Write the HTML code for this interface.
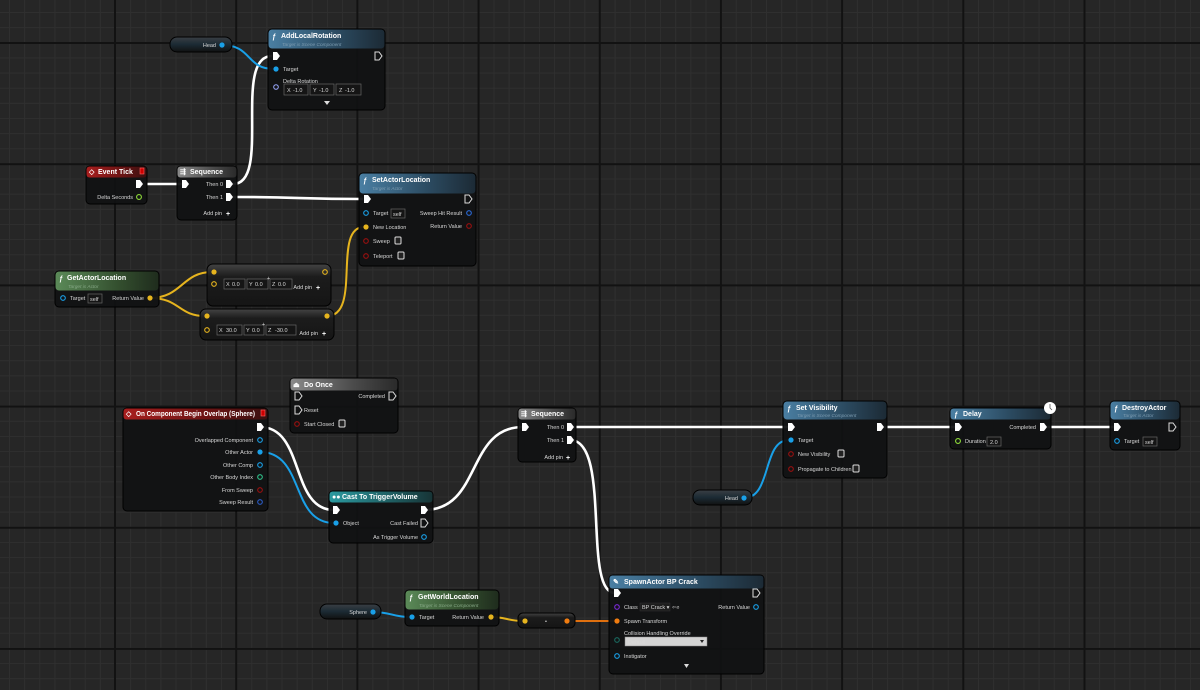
<!DOCTYPE html>
<html><head><meta charset="utf-8"><style>
html,body{margin:0;padding:0;width:1200px;height:690px;overflow:hidden}
body{background-color:#262626;
background-image:
linear-gradient(to right,#121212 2px,transparent 2px),
linear-gradient(to bottom,#121212 2px,transparent 2px),
linear-gradient(to right,#2f2f2f 1px,transparent 1px),
linear-gradient(to bottom,#2f2f2f 1px,transparent 1px);
background-size:121.2px 121.2px,121.2px 121.2px,15.15px 15.15px,15.15px 15.15px;
background-position:114px 0,0 42px,9px 0,0 12px;}
svg{position:absolute;left:0;top:0}
text{font-family:"Liberation Sans",sans-serif;fill:#d8d8d8;font-size:5.5px}
.t{fill:#fff;font-size:7px;font-weight:bold}
.s{fill:#7c9bb0;font-size:4.8px;font-style:italic}
.sg{fill:#86a886;font-size:4.8px;font-style:italic}
.e{text-anchor:end}
.body{fill:#111213;fill-opacity:.95;stroke:#000;stroke-width:1}
.w{fill:none;stroke:#fff;stroke-width:2.6}
.b{fill:none;stroke:#19a0e8;stroke-width:2}
.y{fill:none;stroke:#e6b41e;stroke-width:2}
.box{fill:#151515;stroke:#666;stroke-width:.7}
.cb{fill:#222;stroke:#ddd;stroke-width:1}
</style></head><body>
<svg width="1200" height="690" viewBox="0 0 1200 690">
<defs>
<linearGradient id="gb" x1="0" x2="1"><stop offset="0" stop-color="#4a7fa3"/><stop offset=".6" stop-color="#2b4a60"/><stop offset="1" stop-color="#1c2a35"/></linearGradient>
<linearGradient id="gr" x1="0" x2="1"><stop offset="0" stop-color="#a81e1e"/><stop offset=".6" stop-color="#6a1414"/><stop offset="1" stop-color="#3a1010"/></linearGradient>
<linearGradient id="gg" x1="0" x2="1"><stop offset="0" stop-color="#5b8a58"/><stop offset=".6" stop-color="#34502f"/><stop offset="1" stop-color="#1f2c1d"/></linearGradient>
<linearGradient id="gy" x1="0" x2="1"><stop offset="0" stop-color="#8a8a8a"/><stop offset=".6" stop-color="#4a4a4a"/><stop offset="1" stop-color="#2a2a2a"/></linearGradient>
<linearGradient id="gt" x1="0" x2="1"><stop offset="0" stop-color="#2b9aa0"/><stop offset=".6" stop-color="#1f5e62"/><stop offset="1" stop-color="#173436"/></linearGradient>
<linearGradient id="gp" x1="0" y1="0" x2="0" y2="1"><stop offset="0" stop-color="#3a3f44"/><stop offset=".5" stop-color="#1b2a34"/><stop offset="1" stop-color="#111"/></linearGradient>
<linearGradient id="gc" x1="0" y1="0" x2="0" y2="1"><stop offset="0" stop-color="#444"/><stop offset=".3" stop-color="#1c1c1c"/><stop offset="1" stop-color="#151515"/></linearGradient>
</defs>

<path class="w" d="M147,184 L182,184"/>
<path class="w" d="M233,184 C272,184 232,56 272,56"/>
<path class="w" d="M233,197 C300,197 300,199 363,199"/>
<path class="b" d="M222,45 C252,45 246,69 274,69"/>
<path class="y" d="M150,298 C182,298 182,272 212,272"/>
<path class="y" d="M150,298 C180,298 178,316 205,316"/>
<path class="y" d="M327,316 C362,316 332,227 364,227"/>
<path class="w" d="M260,427 C305,427 290,510 334,510"/>
<path class="b" d="M260,452 C305,452 290,523 334,523"/>
<path class="w" d="M424,510 C482,510 466,427 523,427"/>
<path class="w" d="M570,427 L788,427"/>
<path class="w" d="M570,440 C612,440 582,593 615,593"/>
<path class="w" d="M880,427 L956,427"/>
<path class="w" d="M1043,427 L1115,427"/>
<path class="b" d="M744,498 C772,498 762,440 789,440"/>
<path class="b" d="M373,612 C392,612 392,617 410,617"/>
<path class="y" d="M491,617 C506,617 508,621 523,621"/>
<path d="M567,621 L615,621" fill="none" stroke="#e0700f" stroke-width="2"/>

<rect x="170" y="37" width="62" height="15" rx="7" fill="url(#gp)" stroke="#000"/>
<text x="216" y="47" class="e">Head</text>
<circle cx="222" cy="45" r="2.6" fill="#19a0e8"/>

<rect class="body" x="268" y="29" width="117" height="81" rx="4"/>
<rect x="268.5" y="29.5" width="116" height="19" rx="3.5" fill="url(#gb)"/>
<text x="272" y="39" class="t" font-style="italic">ƒ</text>
<text x="281" y="38" class="t" font-size="6.5">AddLocalRotation</text>
<text x="282" y="46" class="s">Target is Scene Component</text>
<polygon points="273,52 277,52 280,56 277,60 273,60" fill="#fff"/>
<polygon points="375,52 379,52 382,56 379,60 375,60" fill="none" stroke="#ddd" stroke-width="1"/>
<circle cx="276" cy="69" r="2.6" fill="#19a0e8"/>
<text x="283" y="71">Target</text>
<text x="283" y="83">Delta Rotation</text>
<circle cx="276" cy="87" r="2.3" fill="none" stroke="#9aa8ff" stroke-width="1"/>
<rect class="box" x="284" y="84" width="24" height="11"/><text x="287" y="92" fill="#777">X</text><text x="293" y="92" fill="#fff" font-size="6.5">-1.0</text>
<rect class="box" x="310" y="84" width="24" height="11"/><text x="313" y="92" fill="#777">Y</text><text x="319" y="92" fill="#fff" font-size="6.5">-1.0</text>
<rect class="box" x="336" y="84" width="25" height="11"/><text x="339" y="92" fill="#777">Z</text><text x="345" y="92" fill="#fff" font-size="6.5">-1.0</text>
<polygon points="324,101 330,101 327,105" fill="#ddd"/>

<rect class="body" x="86" y="166" width="61" height="38" rx="4"/>
<rect x="86.5" y="166.5" width="60" height="11" rx="3" fill="url(#gr)"/>
<text x="89" y="174" class="t" font-size="6">◇</text>
<text x="98" y="174" class="t" font-size="6.5">Event Tick</text>
<rect x="140" y="168" width="4" height="6" fill="#c00" stroke="#f66" stroke-width=".6"/>
<polygon points="136,180 140,180 143,184 140,188 136,188" fill="#fff"/>
<text x="133" y="199" class="e">Delta Seconds</text>
<circle cx="139" cy="197" r="2.4" fill="none" stroke="#8fdc3a" stroke-width="1.1"/>

<rect class="body" x="177" y="166" width="60" height="54" rx="4"/>
<rect x="177.5" y="166.5" width="59" height="11" rx="3" fill="url(#gy)"/>
<text x="180" y="174" class="t" font-size="6">⇶</text>
<text x="190" y="174" class="t" font-size="6.5">Sequence</text>
<polygon points="182,180 186,180 189,184 186,188 182,188" fill="#fff"/>
<text x="223" y="186" class="e">Then 0</text>
<polygon points="226,180 230,180 233,184 230,188 226,188" fill="#fff"/>
<text x="223" y="199" class="e">Then 1</text>
<polygon points="226,193 230,193 233,197 230,201 226,201" fill="#fff"/>
<text x="222" y="215" class="e">Add pin</text>
<text x="226" y="216" class="t">+</text>

<rect class="body" x="359" y="173" width="117" height="93" rx="4"/>
<rect x="359.5" y="173.5" width="116" height="20" rx="3.5" fill="url(#gb)"/>
<text x="363" y="183" class="t" font-style="italic">ƒ</text>
<text x="372" y="182" class="t" font-size="6.5">SetActorLocation</text>
<text x="372" y="190" class="s">Target is Actor</text>
<polygon points="364,195 368,195 371,199 368,203 364,203" fill="#fff"/>
<polygon points="465,195 469,195 472,199 469,203 465,203" fill="none" stroke="#ddd"/>
<circle cx="366" cy="213" r="2.3" fill="none" stroke="#19a0e8" stroke-width="1.1"/>
<text x="373" y="215">Target</text>
<rect class="box" x="391" y="209" width="14" height="9"/><text x="393" y="216" fill="#ccc" font-size="5">self</text>
<text x="462" y="215" class="e">Sweep Hit Result</text>
<circle cx="469" cy="213" r="2.3" fill="none" stroke="#2a6ad8" stroke-width="1.1"/>
<circle cx="366" cy="227" r="2.6" fill="#e6b41e"/>
<text x="373" y="229">New Location</text>
<text x="462" y="228" class="e">Return Value</text>
<circle cx="469" cy="226" r="2.3" fill="none" stroke="#9a1010" stroke-width="1.1"/>
<circle cx="366" cy="241" r="2.3" fill="none" stroke="#9a1010" stroke-width="1.1"/>
<text x="373" y="243">Sweep</text>
<rect class="cb" x="395" y="237" width="6" height="7" rx="1"/>
<circle cx="366" cy="256" r="2.3" fill="none" stroke="#9a1010" stroke-width="1.1"/>
<text x="373" y="258">Teleport</text>
<rect class="cb" x="398" y="252" width="6" height="7" rx="1"/>

<rect class="body" x="55" y="271" width="104" height="36" rx="4"/>
<rect x="55.5" y="271.5" width="103" height="19" rx="3.5" fill="url(#gg)"/>
<text x="59" y="281" class="t" font-style="italic">ƒ</text>
<text x="67" y="280" class="t" font-size="6.5">GetActorLocation</text>
<text x="68" y="288" class="sg">Target is Actor</text>
<circle cx="63" cy="298" r="2.3" fill="none" stroke="#19a0e8" stroke-width="1.1"/>
<text x="70" y="300">Target</text>
<rect class="box" x="88" y="294" width="14" height="9"/><text x="90" y="301" fill="#ccc" font-size="5">self</text>
<text x="144" y="300" class="e">Return Value</text>
<circle cx="150" cy="298" r="2.6" fill="#e6b41e"/>

<rect x="207" y="264" width="124" height="42" rx="6" fill="url(#gc)" stroke="#000"/>
<circle cx="214" cy="272" r="2.6" fill="#e6b41e"/>
<circle cx="325" cy="272" r="2.3" fill="none" stroke="#e6b41e" stroke-width="1.1"/>
<circle cx="214" cy="284" r="2.3" fill="none" stroke="#e6b41e" stroke-width="1.1"/>
<rect class="box" x="224" y="279" width="21" height="10"/><text x="226" y="286" fill="#777">X</text><text x="232" y="286" fill="#fff" font-size="6">0.0</text>
<rect class="box" x="247" y="279" width="21" height="10"/><text x="249" y="286" fill="#777">Y</text><text x="255" y="286" fill="#fff" font-size="6">0.0</text>
<rect class="box" x="270" y="279" width="22" height="10"/><text x="272" y="286" fill="#777">Z</text><text x="278" y="286" fill="#fff" font-size="6">0.0</text>
<text x="267" y="280" fill="#aaa" font-size="7">+</text>
<text x="312" y="289" class="e">Add pin</text>
<text x="316" y="290" class="t">+</text>

<rect x="200" y="309" width="134" height="31" rx="6" fill="url(#gc)" stroke="#000"/>
<circle cx="207" cy="316" r="2.6" fill="#e6b41e"/>
<circle cx="327" cy="316" r="2.6" fill="#e6b41e"/>
<circle cx="207" cy="330" r="2.3" fill="none" stroke="#e6b41e" stroke-width="1.1"/>
<rect class="box" x="217" y="325" width="25" height="10"/><text x="219" y="332" fill="#777">X</text><text x="226" y="332" fill="#fff" font-size="6">30.0</text>
<rect class="box" x="244" y="325" width="20" height="10"/><text x="246" y="332" fill="#777">Y</text><text x="252" y="332" fill="#fff" font-size="6">0.0</text>
<rect class="box" x="266" y="325" width="30" height="10"/><text x="268" y="332" fill="#777">Z</text><text x="275" y="332" fill="#fff" font-size="6">-30.0</text>
<text x="262" y="326" fill="#aaa" font-size="7">+</text>
<text x="318" y="335" class="e">Add pin</text>
<text x="322" y="336" class="t">+</text>

<rect class="body" x="290" y="378" width="108" height="55" rx="4"/>
<rect x="290.5" y="378.5" width="107" height="12" rx="3" fill="url(#gy)"/>
<text x="293" y="387" class="t" font-size="6">⏏</text>
<text x="304" y="387" class="t" font-size="6.5">Do Once</text>
<polygon points="295,392 299,392 302,396 299,400 295,400" fill="none" stroke="#ddd"/>
<text x="385" y="398" class="e">Completed</text>
<polygon points="389,392 393,392 396,396 393,400 389,400" fill="none" stroke="#ddd"/>
<polygon points="295,406 299,406 302,410 299,414 295,414" fill="none" stroke="#ddd"/>
<text x="304" y="412">Reset</text>
<circle cx="297" cy="424" r="2.3" fill="none" stroke="#9a1010" stroke-width="1.1"/>
<text x="304" y="426">Start Closed</text>
<rect class="cb" x="339" y="420" width="6" height="7" rx="1"/>

<rect class="body" x="123" y="408" width="145" height="103" rx="4"/>
<rect x="123.5" y="408.5" width="144" height="11" rx="3" fill="url(#gr)"/>
<text x="126" y="416" class="t" font-size="6">◇</text>
<text x="136" y="416" class="t" font-size="6" textLength="119" lengthAdjust="spacingAndGlyphs">On Component Begin Overlap (Sphere)</text>
<rect x="261" y="410" width="4" height="6" fill="#c00" stroke="#f66" stroke-width=".6"/>
<polygon points="257,423 261,423 264,427 261,431 257,431" fill="#fff"/>
<text x="253" y="442" class="e">Overlapped Component</text>
<circle cx="260" cy="440" r="2.3" fill="none" stroke="#19a0e8" stroke-width="1.1"/>
<text x="253" y="454" class="e">Other Actor</text>
<circle cx="260" cy="452" r="2.6" fill="#19a0e8"/>
<text x="253" y="467" class="e">Other Comp</text>
<circle cx="260" cy="465" r="2.3" fill="none" stroke="#19a0e8" stroke-width="1.1"/>
<text x="253" y="479" class="e">Other Body Index</text>
<circle cx="260" cy="477" r="2.3" fill="none" stroke="#2fc08a" stroke-width="1.1"/>
<text x="253" y="492" class="e">From Sweep</text>
<circle cx="260" cy="490" r="2.3" fill="none" stroke="#9a1010" stroke-width="1.1"/>
<text x="253" y="504" class="e">Sweep Result</text>
<circle cx="260" cy="502" r="2.3" fill="none" stroke="#2a5cc8" stroke-width="1.1"/>

<rect class="body" x="329" y="491" width="104" height="52" rx="4"/>
<rect x="329.5" y="491.5" width="103" height="11" rx="3" fill="url(#gt)"/>
<text x="332" y="499" class="t" font-size="5">●●</text>
<text x="342" y="499" class="t" font-size="6.5">Cast To TriggerVolume</text>
<polygon points="333,506 337,506 340,510 337,514 333,514" fill="#fff"/>
<polygon points="421,506 425,506 428,510 425,514 421,514" fill="#fff"/>
<circle cx="336" cy="523" r="2.6" fill="#19a0e8"/>
<text x="343" y="525">Object</text>
<text x="418" y="525" class="e">Cast Failed</text>
<polygon points="421,519 425,519 428,523 425,527 421,527" fill="none" stroke="#ddd"/>
<text x="418" y="539" class="e">As Trigger Volume</text>
<circle cx="424" cy="537" r="2.3" fill="none" stroke="#19a0e8" stroke-width="1.1"/>

<rect class="body" x="518" y="408" width="58" height="54" rx="4"/>
<rect x="518.5" y="408.5" width="57" height="11" rx="3" fill="url(#gy)"/>
<text x="521" y="416" class="t" font-size="6">⇶</text>
<text x="531" y="416" class="t" font-size="6.5">Sequence</text>
<polygon points="522,423 526,423 529,427 526,431 522,431" fill="#fff"/>
<text x="564" y="429" class="e">Then 0</text>
<polygon points="567,423 571,423 574,427 571,431 567,431" fill="#fff"/>
<text x="564" y="442" class="e">Then 1</text>
<polygon points="567,436 571,436 574,440 571,444 567,444" fill="#fff"/>
<text x="563" y="459" class="e">Add pin</text>
<text x="566" y="460" class="t">+</text>

<rect class="body" x="783" y="401" width="104" height="77" rx="4"/>
<rect x="783.5" y="401.5" width="103" height="18" rx="3.5" fill="url(#gb)"/>
<text x="787" y="411" class="t" font-style="italic">ƒ</text>
<text x="796" y="410" class="t" font-size="6.5">Set Visibility</text>
<text x="797" y="417" class="s">Target is Scene Component</text>
<polygon points="788,423 792,423 795,427 792,431 788,431" fill="#fff"/>
<polygon points="877,423 881,423 884,427 881,431 877,431" fill="#fff"/>
<circle cx="791" cy="440" r="2.6" fill="#19a0e8"/>
<text x="798" y="442">Target</text>
<circle cx="791" cy="454" r="2.3" fill="none" stroke="#9a1010" stroke-width="1.1"/>
<text x="798" y="456">New Visibility</text>
<rect class="cb" x="838" y="450" width="6" height="7" rx="1"/>
<circle cx="791" cy="469" r="2.3" fill="none" stroke="#9a1010" stroke-width="1.1"/>
<text x="798" y="471">Propagate to Children</text>
<rect class="cb" x="853" y="465" width="6" height="7" rx="1"/>

<rect x="693" y="490" width="59" height="15" rx="7" fill="url(#gp)" stroke="#000"/>
<text x="738" y="500" class="e">Head</text>
<circle cx="744" cy="498" r="2.6" fill="#19a0e8"/>

<rect class="body" x="950" y="408" width="101" height="41" rx="4"/>
<rect x="950.5" y="408.5" width="100" height="11" rx="3" fill="url(#gb)"/>
<text x="954" y="417" class="t" font-style="italic">ƒ</text>
<text x="963" y="416" class="t" font-size="6.5">Delay</text>
<circle cx="1050" cy="408" r="6" fill="#fff"/>
<path d="M1050,404 L1050,408 L1052,410" stroke="#555" stroke-width=".8" fill="none"/>
<polygon points="955,423 959,423 962,427 959,431 955,431" fill="#fff"/>
<text x="1036" y="429" class="e">Completed</text>
<polygon points="1040,423 1044,423 1047,427 1044,431 1040,431" fill="#fff"/>
<circle cx="958" cy="441" r="2.4" fill="none" stroke="#8fdc3a" stroke-width="1.1"/>
<text x="965" y="443">Duration</text>
<rect class="box" x="987" y="437" width="14" height="9"/><text x="990" y="444" fill="#fff" font-size="5.5">2.0</text>

<rect class="body" x="1110" y="401" width="70" height="49" rx="4"/>
<rect x="1110.5" y="401.5" width="69" height="18" rx="3.5" fill="url(#gb)"/>
<text x="1114" y="411" class="t" font-style="italic">ƒ</text>
<text x="1122" y="410" class="t" font-size="6.5">DestroyActor</text>
<text x="1123" y="417" class="s">Target is Actor</text>
<polygon points="1114,423 1118,423 1121,427 1118,431 1114,431" fill="#fff"/>
<polygon points="1169,423 1173,423 1176,427 1173,431 1169,431" fill="none" stroke="#ddd"/>
<circle cx="1117" cy="441" r="2.3" fill="none" stroke="#19a0e8" stroke-width="1.1"/>
<text x="1124" y="443">Target</text>
<rect class="box" x="1143" y="437" width="14" height="9"/><text x="1145" y="444" fill="#ccc" font-size="5">self</text>

<rect class="body" x="609" y="575" width="155" height="99" rx="4"/>
<rect x="609.5" y="575.5" width="154" height="13" rx="3" fill="url(#gb)"/>
<text x="613" y="584" class="t" font-size="6">✎</text>
<text x="624" y="584" class="t" font-size="6.5">SpawnActor BP Crack</text>
<polygon points="614,589 618,589 621,593 618,597 614,597" fill="#fff"/>
<polygon points="753,589 757,589 760,593 757,597 753,597" fill="none" stroke="#ddd"/>
<circle cx="617" cy="607" r="2.3" fill="none" stroke="#7a2ad8" stroke-width="1.1"/>
<text x="624" y="609">Class</text>
<rect x="640" y="603" width="30" height="8" fill="#1d1d1d" stroke="#333" stroke-width=".5"/><text x="642" y="609" fill="#999" font-size="5">BP Crack ▾</text>
<text x="672" y="609" fill="#555" font-size="5">⇦⌕</text>
<text x="750" y="609" class="e">Return Value</text>
<circle cx="756" cy="607" r="2.3" fill="none" stroke="#19a0e8" stroke-width="1.1"/>
<circle cx="617" cy="621" r="2.6" fill="#f07c10"/>
<text x="624" y="623">Spawn Transform</text>
<text x="624" y="635">Collision Handling Override</text>
<circle cx="617" cy="640" r="2.3" fill="none" stroke="#1a6a60" stroke-width="1.1"/>
<rect x="625" y="637" width="82" height="9" fill="#d4d4d4" stroke="#888" stroke-width=".5"/>
<text x="628" y="644" fill="#222" font-size="5">Default</text>
<polygon points="700,640 704,640 702,643" fill="#222"/>
<circle cx="617" cy="656" r="2.3" fill="none" stroke="#19a0e8" stroke-width="1.1"/>
<text x="624" y="658">Instigator</text>
<polygon points="684,664 689,664 686.5,668" fill="#ddd"/>

<rect class="body" x="405" y="590" width="94" height="36" rx="4"/>
<rect x="405.5" y="590.5" width="93" height="19" rx="3.5" fill="url(#gg)"/>
<text x="409" y="600" class="t" font-style="italic">ƒ</text>
<text x="418" y="599" class="t" font-size="6.5">GetWorldLocation</text>
<text x="419" y="607" class="sg">Target is Scene Component</text>
<circle cx="412" cy="617" r="2.6" fill="#19a0e8"/>
<text x="419" y="619">Target</text>
<text x="484" y="619" class="e">Return Value</text>
<circle cx="491" cy="617" r="2.6" fill="#e6b41e"/>

<rect x="320" y="604" width="61" height="15" rx="7" fill="url(#gp)" stroke="#000"/>
<text x="367" y="614" class="e">Sphere</text>
<circle cx="373" cy="612" r="2.6" fill="#19a0e8"/>

<rect x="518" y="613" width="57" height="15" rx="5" fill="url(#gc)" stroke="#000"/>
<circle cx="525" cy="621" r="2.6" fill="#e6b41e"/>
<text x="545" y="623" fill="#ccc" font-size="6">•</text>
<circle cx="567" cy="621" r="2.6" fill="#f07c10"/>
</svg>
</body></html>
